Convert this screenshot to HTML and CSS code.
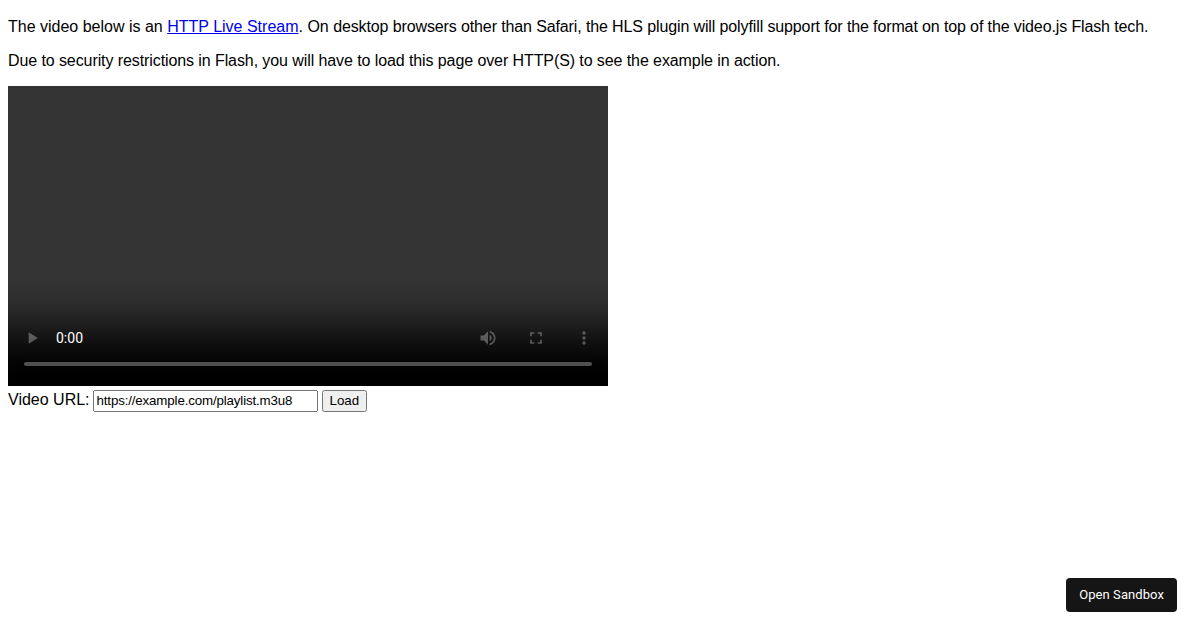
FILE: index.html
```html
<!DOCTYPE html>
<html lang="en">
<head>
  <meta charset="UTF-8">
  <title>Video.js HLS Example</title>
  <link rel="stylesheet" href="styles.css">
</head>
<body>
  <p>The video below is an <a href="#">HTTP Live Stream</a>. On <span class="tight">desktop browsers other than Safari, the HLS plugin will polyfill support for the format on top of the video.js Flash tech.</span></p>
  <p class="note">Due to security restrictions in Flash, you will have to load this page over HTTP(S) to see the example in action.</p>
  <video class="player" width="600" height="300" controls></video>
  <form class="load-form">
    <label for="url">Video URL:</label>
    <input type="url" id="url" value="https://example.com/playlist.m3u8">
    <button type="button">Load</button>
  </form>
  <a class="sandbox" href="#">Open Sandbox</a>
</body>
</html>
```

FILE: styles.css
```css
body {
  margin: 0 8px;
  padding-top: 2px;
  font-family: Arial, Helvetica, sans-serif;
  font-size: 16px;
  color: #000;
}
p {
  margin: 16px 0;
}
.tight {
  letter-spacing: -0.12px;
}
.note {
  letter-spacing: -0.09px;
}
.player {
  display: block;
}
.load-form {
  display: flex;
  align-items: center;
  margin-top: 4px;
}
.load-form label {
  margin-bottom: 2px;
}
.load-form input {
  width: 225px;
  height: 22px;
  margin: 0 4px 0 3px;
  padding: 0 2px 2px;
  box-sizing: border-box;
  font-family: Arial, sans-serif;
  letter-spacing: -0.15px;
}
.load-form button {
  height: 22px;
  padding: 0 6px 2px;
  font-family: Arial, sans-serif;
}
.sandbox {
  position: fixed;
  right: 23px;
  bottom: 18px;
  padding: 10px 13px;
  border-radius: 4px;
  background: #151515;
  color: #fff;
  font-family: Roboto, sans-serif;
  font-size: 13px;
  line-height: 14px;
  letter-spacing: 0.08px;
  text-decoration: none;
}
```
